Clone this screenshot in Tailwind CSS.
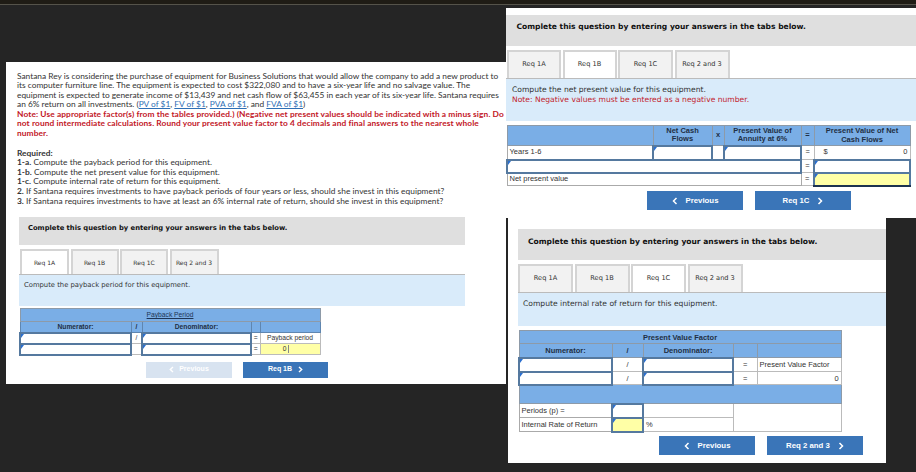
<!DOCTYPE html>
<html><head><meta charset="utf-8"><script src="https://cdn.jsdelivr.net/npm/@tailwindcss/browser@4"></script></head>
<body class="m-0">
<div class="relative w-[916px] h-[472px] overflow-hidden bg-[#252525] font-['Liberation_Sans',sans-serif]">
<div class="absolute left-0 top-0 w-full h-[5px] bg-[#1f1c15] border-b border-[#55534a]"></div>

<!-- left window -->
<section class="absolute left-[6px] top-[62px] w-[500px] h-[322px] bg-white">
  <div class="pl-[11px] pt-[9.5px] w-[499px] whitespace-nowrap font-['Lato',sans-serif] text-[8.35px] leading-[9.55px] text-[#333]">
    <p>Santana Rey is considering the purchase of equipment for Business Solutions that would allow the company to add a new product to<br>its computer furniture line. The equipment is expected to cost $322,080 and to have a six-year life and no salvage value. The<br>equipment is expected to generate income of $13,439 and net cash flow of $63,455 in each year of its six-year life. Santana requires<br>an 6% return on all investments. (<span class="text-[#2f6fb5] underline">PV of $1</span>, <span class="text-[#2f6fb5] underline">FV of $1</span>, <span class="text-[#2f6fb5] underline">PVA of $1</span>, and <span class="text-[#2f6fb5] underline">FVA of $1</span>)</p>
    <p class="font-bold tracking-[0.1px] text-[#c2161f]">Note: Use appropriate factor(s) from the tables provided.) (Negative net present values should be indicated with a minus sign. Do<br>not round intermediate calculations. Round your present value factor to 4 decimals and final answers to the nearest whole<br>number.</p>
    <p class="mt-[10.5px] tracking-[0.03px]"><b>Required:</b><br><b>1-a.</b> Compute the payback period for this equipment.<br><b>1-b.</b> Compute the net present value for this equipment.<br><b>1-c.</b> Compute internal rate of return for this equipment.<br><b>2.</b> If Santana requires investments to have payback periods of four years or less, should she invest in this equipment?<br><b>3.</b> If Santana requires investments to have at least an 6% internal rate of return, should she invest in this equipment?</p>
  </div>
  <div class="absolute left-[13px] top-[155px] w-[446px]">
    <div class="h-[28px] bg-[#dfdfdf] pl-[9px] pt-[6px] font-['DejaVu_Sans',sans-serif] font-bold text-[6.77px] leading-[10px] text-[#111]">Complete this question by entering your answers in the tabs below.</div>
    <div class="flex gap-[1.5px] h-[25px] mt-[4px] pl-[1px] font-['DejaVu_Sans',sans-serif] text-[6px] text-[#333]">
      <div class="w-[49px] flex items-center justify-center bg-white border-x-2 border-t-2 border-[#d4d4d4]">Req 1A</div>
      <div class="w-[48px] flex items-center justify-center bg-[#f2f2f2] border-x-2 border-t-2 border-[#d4d4d4]">Req 1B</div>
      <div class="w-[48px] flex items-center justify-center bg-[#f2f2f2] border-x-2 border-t-2 border-[#d4d4d4]">Req 1C</div>
      <div class="w-[49px] flex items-center justify-center bg-[#f2f2f2] border-x-2 border-t-2 border-[#d4d4d4]">Req 2 and 3</div>
    </div>
    <div class="h-[32px] bg-[#d9ebfa] border-t border-[#bbb] pl-[5px] pt-[5px] font-['DejaVu_Sans',sans-serif] text-[6.8px] leading-[10px] text-[#333]">Compute the payback period for this equipment.</div>
    <table class="mt-[2px] table-fixed border-collapse w-[300px] text-[6.7px] leading-[8px] text-[#333]">
      <colgroup><col class="w-[111px]"><col class="w-[11px]"><col class="w-[109px]"><col class="w-[9px]"><col class="w-[60px]"></colgroup>
      <tbody>
        <tr class="h-[13px] bg-[#7aaee6]"><td colspan="5" class="border border-[#8d9aa8] text-center underline text-[#1d3557]">Payback Period</td></tr>
        <tr class="h-[11px] bg-[#7aaee6] font-bold text-center text-[#1f2f44]"><td class="border border-[#5f86b0]">Numerator:</td><td class="border border-[#5f86b0]">/</td><td class="border border-[#5f86b0]">Denominator:</td><td class="border border-[#5f86b0]"></td><td class="border border-[#5f86b0]"></td></tr>
        <tr class="h-[11px] text-center"><td class="relative border-2 border-[#55799f]"><span class="absolute left-0 top-0 border-t-[4px] border-r-[3px] border-t-[#2a6fd0] border-r-transparent"></span></td><td class="border border-[#bbb]">/</td><td class="relative border-2 border-[#55799f]"><span class="absolute left-0 top-0 border-t-[4px] border-r-[3px] border-t-[#2a6fd0] border-r-transparent"></span></td><td class="border border-[#bbb]">=</td><td class="border border-[#bbb] whitespace-nowrap">Payback period</td></tr>
        <tr class="h-[11px] text-center"><td class="relative border-2 border-[#55799f]"><span class="absolute left-0 top-0 border-t-[4px] border-r-[3px] border-t-[#2a6fd0] border-r-transparent"></span></td><td class="border border-[#bbb]"></td><td class="relative border-2 border-[#55799f]"><span class="absolute left-0 top-0 border-t-[4px] border-r-[3px] border-t-[#2a6fd0] border-r-transparent"></span></td><td class="border border-[#bbb]">=</td><td class="border border-[#bbb] bg-[#ffffa6]"><div class="flex"><span class="w-[28px] text-right pr-[1px] border-r border-[#888]">0</span></div></td></tr>
      </tbody>
    </table>
    <div class="flex gap-[11px] ml-[127px] mt-[6px] font-bold text-[7px] text-white">
      <div class="w-[86px] h-[16px] bg-[#d8e3f0] flex items-center justify-center gap-[5px]"><svg width="5" height="7" viewBox="0 0 5 7" fill="none" stroke="white" stroke-width="1.4"><path d="M4 1 1.3 3.5 4 6"/></svg>Previous</div>
      <div class="w-[85px] h-[16px] bg-[#3a75b8] flex items-center justify-center gap-[6px]">Req 1B<svg width="5" height="7" viewBox="0 0 5 7" fill="none" stroke="white" stroke-width="1.4"><path d="M1 1 3.7 3.5 1 6"/></svg></div>
    </div>
  </div>
</section>

<!-- top right window -->
<section class="absolute left-[506px] top-[8px] w-[410px] h-[210px] bg-white">
  <div class="mt-[7px] h-[31px] bg-[#dfdfdf] pl-[10.5px] pt-[7px] font-['DejaVu_Sans',sans-serif] font-bold text-[7.55px] leading-[10px] text-[#111] absolute top-0 left-0 w-full">Complete this question by entering your answers in the tabs below.</div>
  <div class="absolute left-0 top-[42px] flex gap-[1.5px] h-[28px] pl-[1px] font-['DejaVu_Sans',sans-serif] text-[6.6px] text-[#333]">
    <div class="w-[54px] flex items-center justify-center bg-[#f2f2f2] border-x-2 border-t-2 border-[#d4d4d4]">Req 1A</div>
    <div class="w-[54px] flex items-center justify-center bg-white border-x-2 border-t-2 border-[#d4d4d4]">Req 1B</div>
    <div class="w-[55px] flex items-center justify-center bg-[#f2f2f2] border-x-2 border-t-2 border-[#d4d4d4]">Req 1C</div>
    <div class="w-[55px] flex items-center justify-center bg-[#f2f2f2] border-x-2 border-t-2 border-[#d4d4d4]">Req 2 and 3</div>
  </div>
  <div class="absolute left-0 top-[70px] w-full h-[43px] bg-[#d9ebfa] border-t border-[#bbb] pl-[6px] pt-[6px] font-['DejaVu_Sans',sans-serif] text-[7.6px] leading-[9.5px] text-[#333]">Compute the net present value for this equipment.<br><span class="text-[#c2232e]">Note: Negative values must be entered as a negative number.</span></div>
  <table class="absolute left-0 top-[117px] table-fixed border-collapse w-[403px] text-[7.5px] leading-[8.5px] text-[#333]">
    <colgroup><col class="w-[146px]"><col class="w-[59px]"><col class="w-[12px]"><col class="w-[77px]"><col class="w-[13px]"><col class="w-[96px]"></colgroup>
    <tbody>
      <tr class="h-[20px] bg-[#7aaee6] font-bold text-center text-[#1f2f44]"><td class="border border-[#8d9aa8]"></td><td class="border border-[#8d9aa8]">Net Cash<br>Flows</td><td class="border border-[#8d9aa8]">x</td><td class="border border-[#8d9aa8]">Present Value of<br>Annuity at 6%</td><td class="border border-[#8d9aa8]">=</td><td class="border border-[#8d9aa8]">Present Value of Net<br>Cash Flows</td></tr>
      <tr class="h-[14px]"><td class="border border-[#aaa] pl-[2px]">Years 1-6</td><td class="relative border-2 border-[#55799f]"><span class="absolute left-0 top-0 border-t-[4px] border-r-[3px] border-t-[#2a6fd0] border-r-transparent"></span></td><td class="border border-[#bbb]"></td><td class="relative border-2 border-[#55799f]"><span class="absolute left-0 top-0 border-t-[4px] border-r-[3px] border-t-[#2a6fd0] border-r-transparent"></span></td><td class="border border-[#bbb] text-center">=</td><td class="border border-[#bbb] px-[2px]"><div class="flex justify-between pl-[7px]"><span>$</span><span>0</span></div></td></tr>
      <tr class="h-[13px]"><td colspan="4" class="relative border-2 border-[#55799f]"><span class="absolute left-0 top-0 border-t-[4px] border-r-[3px] border-t-[#2a6fd0] border-r-transparent"></span></td><td class="border border-[#bbb] text-center">=</td><td class="relative border-2 border-[#55799f]"><span class="absolute left-0 top-0 border-t-[4px] border-r-[3px] border-t-[#2a6fd0] border-r-transparent"></span></td></tr>
      <tr class="h-[13px]"><td colspan="4" class="border border-[#aaa] pl-[2px]">Net present value</td><td class="border border-[#bbb] text-center">=</td><td class="relative bg-[#ffffa6] border-2 border-b-[#1c3350] border-[#55799f]"><span class="absolute left-0 top-0 border-t-[4px] border-r-[3px] border-t-[#2a6fd0] border-r-transparent"></span></td></tr>
    </tbody>
  </table>
  <div class="absolute left-[141px] top-[183px] flex gap-[12px] font-bold text-[7.8px] text-white">
    <div class="w-[96px] h-[19px] bg-[#3a75b8] flex items-center justify-center gap-[8px]"><svg width="6" height="8" viewBox="0 0 6 8" fill="none" stroke="white" stroke-width="1.5"><path d="M4.5 1 1.5 4 4.5 7"/></svg>Previous</div>
    <div class="w-[96px] h-[19px] bg-[#3a75b8] flex items-center justify-center gap-[8px]">Req 1C<svg width="6" height="8" viewBox="0 0 6 8" fill="none" stroke="white" stroke-width="1.5"><path d="M1.5 1 4.5 4 1.5 7"/></svg></div>
  </div>
</section>

<!-- lower right window -->
<section class="absolute left-[508px] top-[218px] w-[378px] h-[245px] bg-white">
  <div class="absolute left-[10px] top-[11px] w-[368px] h-[31px] bg-[#dfdfdf] pl-[10px] pt-[8px] font-['DejaVu_Sans',sans-serif] font-bold text-[7.55px] leading-[10px] text-[#111]">Complete this question by entering your answers in the tabs below.</div>
  <div class="absolute left-[10px] top-[46px] flex gap-[1.5px] h-[28px] font-['DejaVu_Sans',sans-serif] text-[6.6px] text-[#333]">
    <div class="w-[55px] flex items-center justify-center bg-[#f2f2f2] border-x-2 border-t-2 border-[#d4d4d4]">Req 1A</div>
    <div class="w-[55px] flex items-center justify-center bg-[#f2f2f2] border-x-2 border-t-2 border-[#d4d4d4]">Req 1B</div>
    <div class="w-[55px] flex items-center justify-center bg-white border-x-2 border-t-2 border-[#d4d4d4]">Req 1C</div>
    <div class="w-[55px] flex items-center justify-center bg-[#f2f2f2] border-x-2 border-t-2 border-[#d4d4d4]">Req 2 and 3</div>
  </div>
  <div class="absolute left-[10px] top-[74px] w-[368px] h-[34px] bg-[#d9ebfa] border-t border-[#bbb] pl-[5px] pt-[6px] font-['DejaVu_Sans',sans-serif] text-[7.6px] leading-[10px] text-[#333]">Compute internal rate of return for this equipment.</div>
  <table class="absolute left-[10px] top-[112px] table-fixed border-collapse w-[322px] text-[7.5px] leading-[9px] text-[#333]">
    <colgroup><col class="w-[93px]"><col class="w-[31px]"><col class="w-[90px]"><col class="w-[24px]"><col class="w-[84px]"></colgroup>
    <tbody>
      <tr class="h-[13px] bg-[#7aaee6]"><td colspan="5" class="border border-[#8d9aa8] text-center font-bold text-[#1f2f44]">Present Value Factor</td></tr>
      <tr class="h-[14px] bg-[#7aaee6] font-bold text-center text-[#1f2f44]"><td class="border border-[#8d9aa8]">Numerator:</td><td class="border border-[#8d9aa8]">/</td><td class="border border-[#8d9aa8]">Denominator:</td><td class="border border-[#8d9aa8]"></td><td class="border border-[#8d9aa8]"></td></tr>
      <tr class="h-[14px]"><td class="relative border-2 border-[#55799f]"><span class="absolute left-0 top-0 border-t-[4px] border-r-[3px] border-t-[#2a6fd0] border-r-transparent"></span></td><td class="border border-[#bbb] text-center">/</td><td class="relative border-2 border-[#55799f]"><span class="absolute left-0 top-0 border-t-[4px] border-r-[3px] border-t-[#2a6fd0] border-r-transparent"></span></td><td class="border border-[#bbb] text-center">=</td><td class="border border-[#bbb] pl-[2px] whitespace-nowrap">Present Value Factor</td></tr>
      <tr class="h-[13px]"><td class="relative border-2 border-[#55799f]"><span class="absolute left-0 top-0 border-t-[4px] border-r-[3px] border-t-[#2a6fd0] border-r-transparent"></span></td><td class="border border-[#bbb] text-center">/</td><td class="relative border-2 border-[#55799f]"><span class="absolute left-0 top-0 border-t-[4px] border-r-[3px] border-t-[#2a6fd0] border-r-transparent"></span></td><td class="border border-[#bbb] text-center">=</td><td class="border border-[#bbb] text-right pr-[2px]">0</td></tr>
      <tr class="h-[19px] bg-[#7aaee6]"><td colspan="5" class="border border-[#8d9aa8]"></td></tr>
      <tr class="h-[14px]"><td class="border border-[#aaa] pl-[2px] whitespace-nowrap">Periods (p) =</td><td class="relative border-2 border-[#55799f]"><span class="absolute left-0 top-0 border-t-[4px] border-r-[3px] border-t-[#2a6fd0] border-r-transparent"></span></td><td class="border border-[#bbb]"></td><td rowspan="2" colspan="2" class="border border-[#bbb]"></td></tr>
      <tr class="h-[14px]"><td class="border border-[#aaa] pl-[2px] whitespace-nowrap">Internal Rate of Return</td><td class="relative bg-[#ffffa6] border-2 border-[#55799f]"><span class="absolute left-0 top-0 border-t-[4px] border-r-[3px] border-t-[#2a6fd0] border-r-transparent"></span></td><td class="border border-[#bbb] pl-[2px]">%</td></tr>
    </tbody>
  </table>
  <div class="absolute left-[151px] top-[218px] flex gap-[12px] font-bold text-[7.8px] text-white">
    <div class="w-[96px] h-[19px] bg-[#3a75b8] flex items-center justify-center gap-[8px]"><svg width="6" height="8" viewBox="0 0 6 8" fill="none" stroke="white" stroke-width="1.5"><path d="M4.5 1 1.5 4 4.5 7"/></svg>Previous</div>
    <div class="w-[96px] h-[19px] bg-[#3a75b8] flex items-center justify-center gap-[8px]">Req 2 and 3<svg width="6" height="8" viewBox="0 0 6 8" fill="none" stroke="white" stroke-width="1.5"><path d="M1.5 1 4.5 4 1.5 7"/></svg></div>
  </div>
</section>
</div>
</body></html>
